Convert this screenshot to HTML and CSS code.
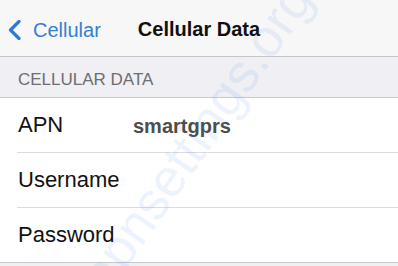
FILE: index.html
```html
<!DOCTYPE html>
<html>
<head>
<meta charset="utf-8">
<link rel="stylesheet" href="styles.css">
</head>
<body>
<div class="screen">
  <header class="nav">
    <div class="back">
      <svg class="chev" width="13" height="20" viewBox="0 0 13 20"><polyline points="11,1.5 2.5,10 11,18.5" fill="none" stroke="#2b7bd4" stroke-width="3.2" stroke-linecap="round" stroke-linejoin="round"/></svg>
      <span class="back-text">Cellular</span>
    </div>
    <div class="title">Cellular Data</div>
    <div></div>
  </header>
  <div class="section-head">CELLULAR DATA</div>
  <div class="list">
    <div class="row"><div class="cell"><span class="label">APN</span><span class="value">smartgprs</span></div></div>
    <div class="row"><div class="cell"><span class="label">Username</span></div></div>
    <div class="row last"><div class="cell"><span class="label">Password</span></div></div>
  </div>
  <span class="watermark">apnsettings.org</span>
</div>
</body>
</html>
```
FILE: styles.css
```css
html, body {
  margin: 0;
  padding: 0;
  overflow: hidden;
}
body {
  font-family: "Liberation Sans", Arial, sans-serif;
  background: #efeff4;
}
.screen {
  position: relative;
  width: 398px;
  height: 266px;
  overflow: hidden;
  background: #efeff4;
}
.nav {
  height: 56px;
  background: #f7f7f8;
  border-bottom: 1px solid #c6c6ca;
  display: grid;
  grid-template-columns: 1fr auto 1fr;
  align-items: center;
}
.back {
  display: flex;
  align-items: center;
  padding-left: 8px;
  padding-top: 4px;
}
.chev {
  display: block;
  margin-right: 12px;
}
.back-text {
  font-size: 20px;
  color: #3580d2;
}
.title {
  font-size: 20px;
  font-weight: bold;
  color: #111;
  padding-top: 2px;
}
.section-head {
  height: 27px;
  padding-top: 13px;
  padding-left: 18px;
  font-size: 17px;
  line-height: 20px;
  color: #6d6d72;
  background: #efeff4;
  border-bottom: 1px solid #c8c7cc;
}
.list {
  background: #fff;
}
.row {
  padding-left: 17px;
}
.cell {
  height: 54px;
  border-bottom: 1px solid #dcdce0;
  display: flex;
  align-items: center;
  padding-left: 1px;
}
.row.last {
  padding-left: 0;
}
.row.last .cell {
  padding-left: 18px;
  border-bottom-color: #c8c7cc;
}
.label {
  width: 115px;
  font-size: 22px;
  color: #111;
}
.value {
  font-size: 20px;
  font-weight: bold;
  color: #4d4d50;
  padding-top: 3px;
}
.watermark {
  position: absolute;
  left: 92px;
  top: 259px;
  font-size: 53px;
  line-height: 53px;
  white-space: nowrap;
  color: rgba(40, 120, 220, 0.09);
  transform-origin: 0 50%;
  transform: rotate(-55deg);
  pointer-events: none;
}
```
